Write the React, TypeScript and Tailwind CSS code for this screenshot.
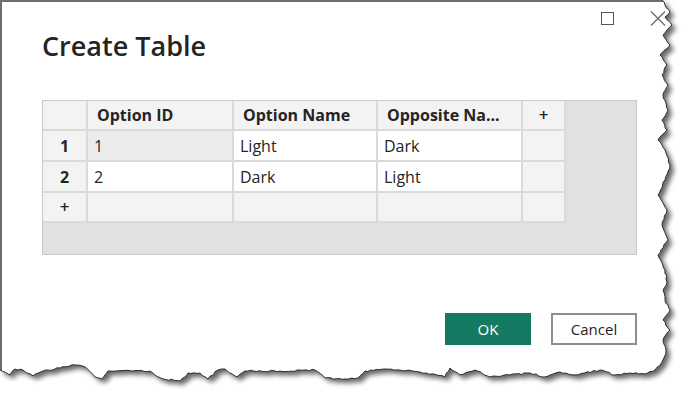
import React from "react";

type P = [number, number];

const rightPts: P[] = [
  [662, 0], [665, 5], [670, 12], [665, 17], [672, 25], [663, 35], [670, 45], [660, 55], [667, 65], [662, 75],
  [668, 85], [663, 95], [668, 110], [662, 120], [667, 130], [658, 140], [665, 150], [670, 165], [665, 180],
  [658, 195], [667, 210], [662, 225], [668, 240], [658, 255], [665, 270], [667, 282], [663, 290], [665, 300],
  [670, 310], [663, 320], [670, 330], [663, 340], [666, 350], [663, 360], [655, 370],
];
const bottomPts: P[] = [
  [645, 374], [630, 373], [615, 375], [600, 370], [575, 375], [560, 372], [545, 377], [530, 373], [510, 375],
  [490, 377], [475, 370], [460, 375], [450, 368], [445, 377], [420, 372], [400, 370], [385, 369], [365, 371],
  [358, 378], [345, 379], [325, 378], [315, 370], [280, 371], [245, 371], [237, 377], [225, 369], [218, 370],
  [208, 379], [200, 373], [188, 373], [180, 381], [163, 379], [150, 371], [108, 371], [102, 379], [95, 377],
  [85, 367], [75, 365], [60, 368], [43, 371], [33, 376], [23, 370], [15, 369], [10, 375], [0, 370],
];

function buildEdge(): P[] {
  let seed = 7;
  const rnd = () => {
    seed = (seed * 16807) % 2147483647;
    return seed / 2147483647;
  };
  const pts = [...rightPts, ...bottomPts];
  const out: P[] = [pts[0]];
  for (let i = 1; i < pts.length; i++) {
    const [x0, y0] = pts[i - 1];
    const [x1, y1] = pts[i];
    const len = Math.hypot(x1 - x0, y1 - y0);
    const n = Math.max(1, Math.round(len / 3));
    const nx = -(y1 - y0) / len;
    const ny = (x1 - x0) / len;
    for (let k = 1; k <= n; k++) {
      const t = k / n;
      const j = k === n ? 0 : (rnd() - 0.5) * 1.6;
      out.push([x0 + (x1 - x0) * t + nx * j, y0 + (y1 - y0) * t + ny * j]);
    }
  }
  return out;
}

const edge = buildEdge();
const edgeStr = edge.map(([x, y], i) => `${i ? "L" : "M"}${x.toFixed(1)} ${y.toFixed(1)}`).join(" ");
const outsidePath = `${edgeStr} L0 398 L690 398 L690 0 Z`;
const insidePath = `M0 0 ${edgeStr.replace(/^M/, "L")} Z`;

function TornEdge() {
  return (
    <svg className="pointer-events-none absolute left-0 top-0" width={690} height={398} viewBox="0 0 690 398">
      <defs>
        <clipPath id="outside">
          <path d={outsidePath} />
        </clipPath>
        <filter id="blur" x="-10%" y="-10%" width="120%" height="120%">
          <feGaussianBlur stdDeviation="2.4" />
        </filter>
      </defs>
      <path d={outsidePath} fill="#ffffff" />
      <g clipPath="url(#outside)">
        <path d={insidePath} fill="#000" opacity={0.6} transform="translate(4 4)" filter="url(#blur)" />
      </g>
      <path d={edgeStr} fill="none" stroke="#2e2e2e" strokeWidth={1} />
    </svg>
  );
}

const font = { fontFamily: '"Open Sans", "Noto Sans", sans-serif' };

function Cell({ children, className = "" }: { children?: React.ReactNode; className?: string }) {
  return <div className={`flex items-center overflow-hidden whitespace-nowrap ${className}`}>{children}</div>;
}

export default function App() {
  const head = "bg-[#f3f3f3] pl-[9px] text-[16px] font-bold text-[#252423]";
  const rowHead = "bg-[#f3f3f3] justify-center text-[16px] font-bold text-[#252423]";
  const data = "bg-white pl-[6px] text-[16px] text-[#252423]";
  const gray = "bg-[#f3f3f3]";
  return (
    <div className="relative h-[398px] w-[690px] overflow-hidden bg-white" style={font}>
      <div className="h-[398px] border-l-2 border-t-2 border-[#6d6d6d]">
        <div className="flex justify-end gap-[36px] pr-[24px] pt-[9px]">
          <div className="mt-[1px] h-[13px] w-[13px] border-[1.5px] border-[#555]" />
          <svg width="16" height="15" viewBox="0 0 16 15">
            <path d="M1 0.5 L15 14.5 M15 0.5 L1 14.5" stroke="#666" strokeWidth="1.2" />
          </svg>
        </div>
        <div className="mt-[2px] pl-[40px] text-[27px] font-semibold leading-[36px] text-[#252423]">Create Table</div>
        <div className="ml-[40px] mt-[36px] h-[155px] w-[595px] border border-[#c9c9c9] bg-[#e1e1e1]">
          <div className="grid w-fit grid-cols-[43px_144px_142px_143px_41px] grid-rows-[28px_29px_29px_28px] gap-[2px] bg-[#dadada] pb-[2px] pr-[2px]">
            <Cell className={gray} />
            <Cell className={head}>Option ID</Cell>
            <Cell className={head}>Option Name</Cell>
            <Cell className={head}>Opposite Na...</Cell>
            <Cell className={`${gray} justify-center text-[17px] font-semibold text-[#252423]`}>+</Cell>

            <Cell className={rowHead}>1</Cell>
            <Cell className={`${data} !bg-[#ebebeb]`}>1</Cell>
            <Cell className={data}>Light</Cell>
            <Cell className={data}>Dark</Cell>
            <Cell className={gray} />

            <Cell className={rowHead}>2</Cell>
            <Cell className={data}>2</Cell>
            <Cell className={data}>Dark</Cell>
            <Cell className={data}>Light</Cell>
            <Cell className={gray} />

            <Cell className={`${gray} justify-center text-[17px] font-semibold text-[#252423]`}>+</Cell>
            <Cell className={gray} />
            <Cell className={gray} />
            <Cell className={gray} />
            <Cell className={gray} />
          </div>
        </div>
        <div className="mr-[53px] mt-[58px] flex justify-end gap-[20px]">
          <button className="flex h-[32px] w-[86px] items-center justify-center bg-[#157a63] text-[15px] text-white">
            OK
          </button>
          <button className="flex h-[32px] w-[86px] items-center justify-center border-2 border-[#8e8e8e] bg-white text-[15px] text-[#252423]">
            Cancel
          </button>
        </div>
      </div>
      <TornEdge />
    </div>
  );
}
